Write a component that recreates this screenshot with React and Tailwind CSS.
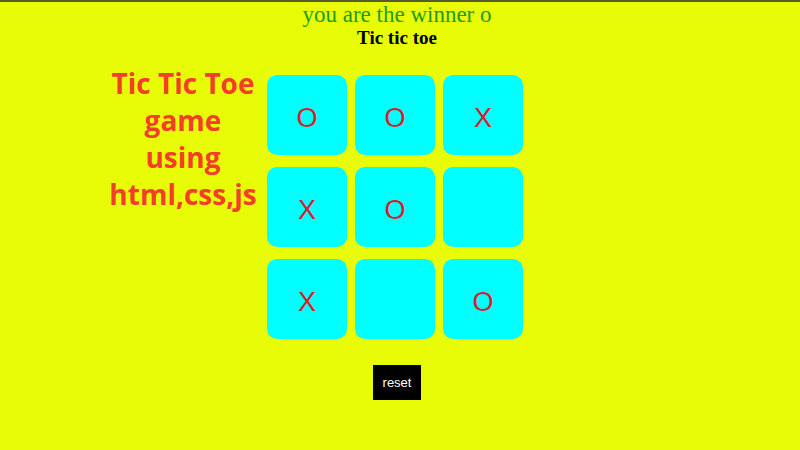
import React from "react";

const cells = ["O", "O", "X", "X", "O", "", "X", "", "O"];

export default function App() {
  return (
    <div className="w-[800px] h-[450px] bg-[#e8fc07] border-t-2 border-[#5a5a30] overflow-hidden pr-[6px]">
      <div className="flex flex-col items-center">
        <div className="mt-[1px] text-[23px] leading-[24px] text-[#1f9a1f]" style={{ fontFamily: '"Liberation Serif", serif' }}>
          you are the winner o
        </div>
        <div className="mt-[0px] text-[19px] leading-[22px] font-bold text-black" style={{ fontFamily: '"Liberation Serif", serif' }}>
          Tic tic toe
        </div>
      </div>
      <div className="flex items-start pl-[103px] mt-[26px]">
        <div
          className="w-[160px] -mt-[10px] text-center text-[28px] leading-[37px] font-bold text-[#f43f28]"
          style={{ fontFamily: '"Open Sans", sans-serif' }}
        >
          Tic Tic Toe
          <br />
          game
          <br />
          using
          <br />
          html,css,js
        </div>
        <div className="ml-[4px] grid grid-cols-[80px_80px_80px] gap-x-[8px] gap-y-[12px]">
          {cells.map((c, i) => (
            <div
              key={i}
              className="w-[80px] h-[80px] rounded-[10px] bg-[#00ffff] flex items-center justify-center pt-[6px] text-[27px] text-[#d8202a]"
              style={{ fontFamily: '"Liberation Sans", Arial, sans-serif' }}
            >
              {c}
            </div>
          ))}
        </div>
      </div>
      <div className="flex justify-center mt-[26px]">
        <button
          className="w-[48px] h-[35px] bg-black text-white text-[13px]"
          style={{ fontFamily: '"Liberation Sans", Arial, sans-serif' }}
        >
          reset
        </button>
      </div>
    </div>
  );
}
